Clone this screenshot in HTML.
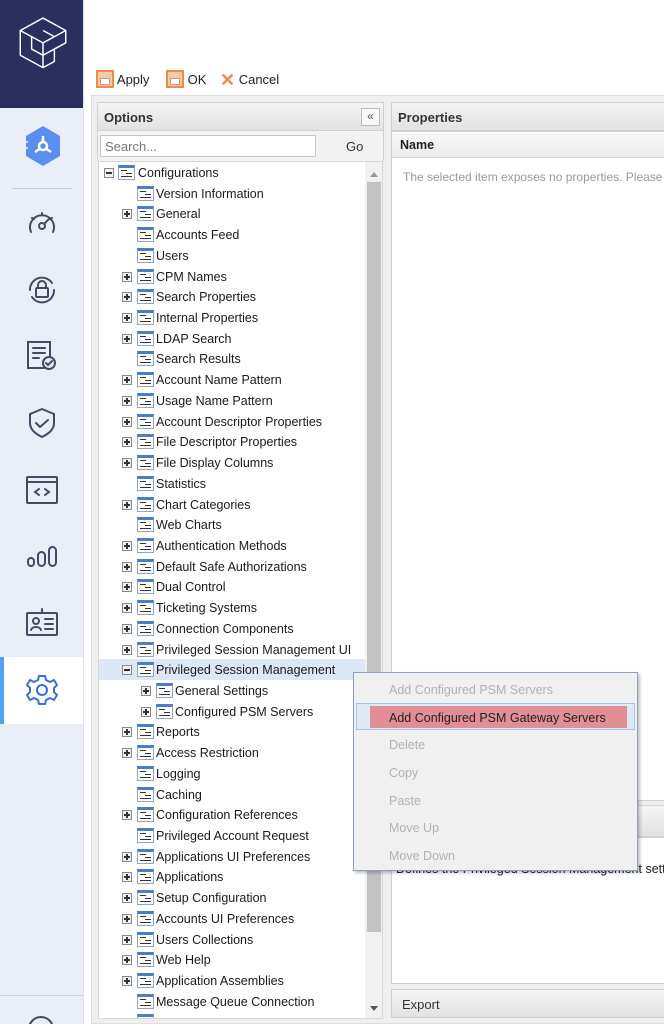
<!DOCTYPE html>
<html style="overflow:hidden;height:1024px"><head><meta charset="utf-8"><style>
*{margin:0;padding:0;box-sizing:border-box}
body{width:664px;height:1024px;overflow:hidden;background:#fff;font-family:"Liberation Sans",Arial,sans-serif;position:relative}
.a{position:absolute}
.side{left:0;top:0;width:84px;height:1024px;background:#e9eef7;border-right:1px solid #dde3ee}
.top{left:0;top:0;width:83px;height:108px;background:#2b2f5f}
.tb{top:70px;font-size:13px;color:#222}
.sv{display:inline-block;width:18px;height:18px;border:2px solid #f08a4b;background:#f6c9a8;vertical-align:-4px;position:relative}
.sv:after{content:"";position:absolute;left:2px;right:2px;bottom:1px;height:5px;background:#fff;border:1px solid #c98}
.outer{left:91px;top:95px;width:580px;height:929px;background:#efefef;border:1px solid #ddd}
.hdr{background:linear-gradient(#f4f4f4,#e2e2e2);border:1px solid #d0d0d0;font-weight:bold;font-size:13px;color:#333;padding:7px 6px}
.tree{left:98px;top:161px;width:285px;height:858px;background:#fff;border:1px solid #d6d6d6;overflow:hidden}
.r{height:20.72px;position:relative;font-size:12.5px;color:#1a1a1a;white-space:nowrap;line-height:22px}
.r .ex{position:absolute;top:6px;width:10px;height:10px;border:1px solid #8a8a8a;background:#f3f3f3}
.r .ex:before{content:"";position:absolute;left:1px;top:3px;width:6px;height:2px;background:#333}
.r .ex.p:after{content:"";position:absolute;left:3px;top:1px;width:2px;height:6px;background:#333}
.r .ic{position:absolute;top:3px;width:17px;height:15px;border:1px solid #8ea5c4;border-top:3px solid #4a7cc7;background:#fff}
.r .ic:before{content:"";position:absolute;left:2px;top:2px;width:11px;height:7px;background:linear-gradient(#333,#333) 0 0/6px 1px no-repeat,linear-gradient(#333,#333) 5px 3px/6px 1px no-repeat,linear-gradient(#333,#333) 0 6px/11px 1px no-repeat}
.r .t{position:absolute}
.l0 .ex{left:5px}.l0 .ic{left:19px}.l0 .t{left:39px}
.l1 .ex{left:23px}.l1 .ic{left:38px}.l1 .t{left:57px}
.l2 .ex{left:42px}.l2 .ic{left:57px}.l2 .t{left:76px}
.sel{background:#dde8f6}
.menu{left:353px;top:672px;width:285px;height:199px;background:#f0f0f0;border:1px solid #8ea0c0;box-shadow:2px 2px 3px rgba(0,0,0,.25);font-size:12.5px;color:#b3b3b3}
.menu div{position:absolute;left:35px}
</style></head><body>
<div class="a side"></div>
<div class="a top"></div>
<svg class="a" style="left:16px;top:16px" width="54" height="62" viewBox="0 0 50 60" fill="none" stroke="#fff" stroke-width="1.4" stroke-linejoin="round"><path d="M25 2 L47 14 L47 26 L36 32 L36 44 L25 50 L3 38 L3 14 Z M3 14 L25 26 L47 14 M25 26 L25 50 M14 20 L14 32 L25 38 L36 32 M25 14 L36 20"/></svg>
<svg class="a" style="left:22px;top:124px" width="42" height="44" viewBox="0 0 42 44"><path d="M21 2 L38 12 L38 32 L21 42 L4 32 L4 12 Z" fill="#5b8ef0"/><circle cx="21" cy="22" r="4" fill="none" stroke="#fff" stroke-width="2.5"/><path d="M21 12 V18 M13 28 L17.5 25 M29 28 L24.5 25" stroke="#fff" stroke-width="2.5"/><path d="M2 18h4M2 24h4" stroke="#e9eef7" stroke-width="1.5"/></svg>
<div class="a" style="left:12px;top:188px;width:60px;height:1px;background:#c8ccd6"></div>
<svg class="a" style="left:24px;top:205px" width="36" height="36" viewBox="0 0 36 36" fill="none" stroke="#454a60" stroke-width="2" stroke-linecap="round"><path d="M7 27 A12 12 0 1 1 29 27"/><circle cx="18" cy="21" r="3"/><path d="M20 19 L25 14 M18 8v2M8 13l2 1M28 13l-2 1"/></svg>
<svg class="a" style="left:24px;top:272px" width="36" height="36" viewBox="0 0 36 36" fill="none" stroke="#454a60" stroke-width="2" stroke-linecap="round"><path d="M6 18 A12 12 0 0 1 28 11 M30 18 A12 12 0 0 1 8 25"/><rect x="12" y="16" width="12" height="9" rx="1"/><path d="M14 16v-3a4 4 0 0 1 8 0v3"/></svg>
<svg class="a" style="left:24px;top:338px" width="36" height="36" viewBox="0 0 36 36" fill="none" stroke="#454a60" stroke-width="2" stroke-linecap="round"><path d="M20 30H4V4h22v14"/><path d="M9 10h12M9 15h12M9 20h6"/><circle cx="25" cy="25" r="6"/><path d="M22 25l2 2 4-4"/></svg>
<svg class="a" style="left:24px;top:405px" width="36" height="36" viewBox="0 0 36 36" fill="none" stroke="#454a60" stroke-width="2" stroke-linecap="round" stroke-linejoin="round"><path d="M18 4 L30 9 V18 C30 25 24 29 18 32 C12 29 6 25 6 18 V9 Z"/><path d="M12 18l4 4 8-7"/></svg>
<svg class="a" style="left:24px;top:472px" width="36" height="36" viewBox="0 0 36 36" fill="none" stroke="#454a60" stroke-width="2" stroke-linecap="round"><rect x="3" y="5" width="30" height="26" rx="1"/><path d="M3 10h30M15 17l-4 3 4 3M21 17l4 3-4 3"/></svg>
<svg class="a" style="left:24px;top:538px" width="36" height="36" viewBox="0 0 36 36" fill="none" stroke="#454a60" stroke-width="2"><rect x="4" y="20" width="6" height="8" rx="3"/><rect x="14" y="14" width="7" height="14" rx="3.5"/><rect x="25" y="9" width="7" height="19" rx="3.5"/></svg>
<svg class="a" style="left:24px;top:605px" width="36" height="36" viewBox="0 0 36 36" fill="none" stroke="#454a60" stroke-width="2" stroke-linecap="round"><rect x="3" y="8" width="30" height="22" rx="1"/><path d="M18 4v4"/><circle cx="12" cy="16" r="3"/><path d="M7 25c1-4 9-4 10 0M21 14h8M21 19h8M21 24h8"/></svg>
<div class="a" style="left:0;top:657px;width:83px;height:67px;background:#fff"></div>
<div class="a" style="left:0;top:657px;width:4px;height:67px;background:#4ea3f6"></div>
<svg class="a" style="left:24px;top:672px" width="36" height="36" viewBox="0 0 36 36" fill="none" stroke="#3b6fd6" stroke-width="2" stroke-linejoin="round"><path d="M15 4h6l1 4 4 2 4-2 3 5-3 3v4l3 3-3 5-4-2-4 2-1 4h-6l-1-4-4-2-4 2-3-5 3-3v-4l-3-3 3-5 4 2 4-2z"/><circle cx="18" cy="18" r="5"/></svg>
<div class="a" style="left:0;top:995px;width:83px;height:1px;background:#d0d5e0"></div>
<div class="a" style="left:28px;top:1016px;width:26px;height:26px;border:2px solid #454a60;border-radius:50%"></div>

<div class="a tb" style="left:96px"><span class="sv"></span> Apply</div>
<div class="a tb" style="left:166px"><span class="sv"></span> OK</div>
<div class="a tb" style="left:220px"><span style="color:#f08a4b;font-size:18px;font-weight:bold;vertical-align:-2px">✕</span> Cancel</div>

<div class="a outer"></div>
<div class="a hdr" style="left:97px;top:102px;width:287px;height:29px">Options</div>
<div class="a" style="left:361px;top:108px;width:19px;height:18px;border:1px solid #bbb;background:#f8f8f8;font-size:12px;text-align:center;line-height:15px;color:#555">«</div>
<div class="a" style="left:97px;top:131px;width:287px;height:30px;background:#f2f2f2;border-left:1px solid #d0d0d0;border-right:1px solid #d0d0d0"></div>
<div class="a" style="left:100px;top:135px;width:216px;height:22px;border:1px solid #c7c7c7;background:#fff;font-size:13px;color:#777;padding:3px 4px">Search...</div>
<div class="a" style="left:346px;top:139px;font-size:13px;color:#333">Go</div>

<div class="a tree">
<div class="r l0"><span class="ex"></span><span class="ic"></span><span class="t">Configurations</span></div>
<div class="r l1"><span class="ic"></span><span class="t">Version Information</span></div>
<div class="r l1"><span class="ex p"></span><span class="ic"></span><span class="t">General</span></div>
<div class="r l1"><span class="ic"></span><span class="t">Accounts Feed</span></div>
<div class="r l1"><span class="ic"></span><span class="t">Users</span></div>
<div class="r l1"><span class="ex p"></span><span class="ic"></span><span class="t">CPM Names</span></div>
<div class="r l1"><span class="ex p"></span><span class="ic"></span><span class="t">Search Properties</span></div>
<div class="r l1"><span class="ex p"></span><span class="ic"></span><span class="t">Internal Properties</span></div>
<div class="r l1"><span class="ex p"></span><span class="ic"></span><span class="t">LDAP Search</span></div>
<div class="r l1"><span class="ic"></span><span class="t">Search Results</span></div>
<div class="r l1"><span class="ex p"></span><span class="ic"></span><span class="t">Account Name Pattern</span></div>
<div class="r l1"><span class="ex p"></span><span class="ic"></span><span class="t">Usage Name Pattern</span></div>
<div class="r l1"><span class="ex p"></span><span class="ic"></span><span class="t">Account Descriptor Properties</span></div>
<div class="r l1"><span class="ex p"></span><span class="ic"></span><span class="t">File Descriptor Properties</span></div>
<div class="r l1"><span class="ex p"></span><span class="ic"></span><span class="t">File Display Columns</span></div>
<div class="r l1"><span class="ic"></span><span class="t">Statistics</span></div>
<div class="r l1"><span class="ex p"></span><span class="ic"></span><span class="t">Chart Categories</span></div>
<div class="r l1"><span class="ic"></span><span class="t">Web Charts</span></div>
<div class="r l1"><span class="ex p"></span><span class="ic"></span><span class="t">Authentication Methods</span></div>
<div class="r l1"><span class="ex p"></span><span class="ic"></span><span class="t">Default Safe Authorizations</span></div>
<div class="r l1"><span class="ex p"></span><span class="ic"></span><span class="t">Dual Control</span></div>
<div class="r l1"><span class="ex p"></span><span class="ic"></span><span class="t">Ticketing Systems</span></div>
<div class="r l1"><span class="ex p"></span><span class="ic"></span><span class="t">Connection Components</span></div>
<div class="r l1"><span class="ex p"></span><span class="ic"></span><span class="t">Privileged Session Management UI</span></div>
<div class="r l1 sel"><span class="ex"></span><span class="ic"></span><span class="t">Privileged Session Management</span></div>
<div class="r l2"><span class="ex p"></span><span class="ic"></span><span class="t">General Settings</span></div>
<div class="r l2"><span class="ex p"></span><span class="ic"></span><span class="t">Configured PSM Servers</span></div>
<div class="r l1"><span class="ex p"></span><span class="ic"></span><span class="t">Reports</span></div>
<div class="r l1"><span class="ex p"></span><span class="ic"></span><span class="t">Access Restriction</span></div>
<div class="r l1"><span class="ic"></span><span class="t">Logging</span></div>
<div class="r l1"><span class="ic"></span><span class="t">Caching</span></div>
<div class="r l1"><span class="ex p"></span><span class="ic"></span><span class="t">Configuration References</span></div>
<div class="r l1"><span class="ic"></span><span class="t">Privileged Account Request</span></div>
<div class="r l1"><span class="ex p"></span><span class="ic"></span><span class="t">Applications UI Preferences</span></div>
<div class="r l1"><span class="ex p"></span><span class="ic"></span><span class="t">Applications</span></div>
<div class="r l1"><span class="ex p"></span><span class="ic"></span><span class="t">Setup Configuration</span></div>
<div class="r l1"><span class="ex p"></span><span class="ic"></span><span class="t">Accounts UI Preferences</span></div>
<div class="r l1"><span class="ex p"></span><span class="ic"></span><span class="t">Users Collections</span></div>
<div class="r l1"><span class="ex p"></span><span class="ic"></span><span class="t">Web Help</span></div>
<div class="r l1"><span class="ex p"></span><span class="ic"></span><span class="t">Application Assemblies</span></div>
<div class="r l1"><span class="ic"></span><span class="t">Message Queue Connection</span></div>
<div class="r l1"><span class="ic"></span><span class="t"></span></div>
<div class="a" style="left:266px;top:0;width:18px;height:858px;background:#f1f1f1"></div>
<div class="a" style="left:268px;top:20px;width:14px;height:750px;background:#c2c2c2"></div>
<div class="a" style="left:271px;top:10px;width:0;height:0;border:4px solid transparent;border-bottom:5px solid #999;border-top:0"></div>
<div class="a" style="left:271px;top:844px;width:0;height:0;border:4px solid transparent;border-top:5px solid #555;border-bottom:0"></div>
</div>

<div class="a hdr" style="left:391px;top:102px;width:280px;height:29px">Properties</div>
<div class="a" style="left:391px;top:131px;width:280px;height:670px;background:#fff;border:1px solid #d0d0d0"></div>
<div class="a" style="left:392px;top:133px;width:280px;height:25px;background:linear-gradient(#f7f7f7,#ececec);border-bottom:1px solid #d8d8d8;font-size:12.5px;font-weight:bold;color:#222;padding:5px 8px">Name</div>
<div class="a" style="left:403px;top:170px;font-size:12px;color:#999;white-space:nowrap">The selected item exposes no properties. Please</div>
<div class="a" style="left:391px;top:805px;width:280px;height:32px;background:linear-gradient(#f4f4f4,#e2e2e2);border:1px solid #d0d0d0"></div>
<div class="a" style="left:391px;top:837px;width:280px;height:147px;background:#fff;border:1px solid #d0d0d0"></div>
<div class="a" style="left:396px;top:862px;font-size:12.5px;color:#222;white-space:nowrap">Defines the Privileged Session Management settings</div>
<div class="a hdr" style="left:391px;top:989px;width:280px;height:29px;font-weight:normal;font-size:13px;padding-left:10px">Export</div>

<div class="a menu">
<div style="top:10px">Add Configured PSM Servers</div>
<div style="left:2px;top:30px;width:279px;height:27px;background:#dfe9f6;border:1px solid #aac4e8"></div>
<div style="left:16px;top:33px;width:257px;height:22px;background:#e28e96"></div>
<div style="top:38px;color:#222">Add Configured PSM Gateway Servers</div>
<div style="top:65px">Delete</div>
<div style="top:93px">Copy</div>
<div style="top:121px">Paste</div>
<div style="top:148px">Move Up</div>
<div style="top:176px">Move Down</div>
</div>
</body></html>
